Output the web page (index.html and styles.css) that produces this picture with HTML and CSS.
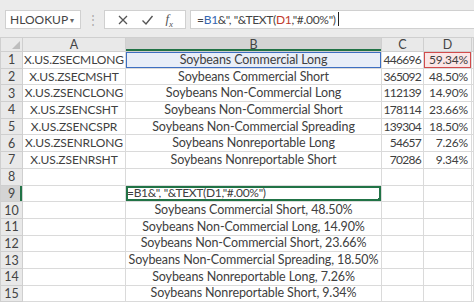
FILE: index.html
```html
<!DOCTYPE html>
<html lang="en">
<head>
    <meta charset="UTF-8">
    <title>Sheet</title>
    <link rel="stylesheet" href="styles.css">
</head>
<body>
    <div class="toolbar">
        <div class="namebox">
            <span>HLOOKUP</span>
            <span class="caret">&#9662;</span>
        </div>
        <div class="grip">&#8942;</div>
        <div class="fxbuttons">
            <svg width="12" height="12" viewBox="0 0 12 12"><path d="M2 2 L10 10 M10 2 L2 10" stroke="#555" stroke-width="1.3" fill="none"/></svg>
            <svg width="13" height="12" viewBox="0 0 13 12"><path d="M1.5 6.5 L5 10 L11.5 2" stroke="#555" stroke-width="1.4" fill="none"/></svg>
            <span class="fx">f<sub>x</sub></span>
        </div>
        <div class="formula">=<span class="ref-b">B1</span>&amp;", "&amp;TEXT(<span class="ref-d">D1</span>,"#.00%")<span class="cursor"></span></div>
    </div>

    <table class="sheet">
        <colgroup>
            <col class="c-hdr"><col class="c-a"><col class="c-b"><col class="c-c"><col class="c-d"><col>
        </colgroup>
        <tr class="head">
            <th class="corner"></th><th>A</th><th class="sel-col">B</th><th>C</th><th>D</th><th></th>
        </tr>
        <tr><th>1</th><td class="code">X.US.ZSECMLONG</td><td class="hl-blue">Soybeans Commercial Long</td><td class="num">446696</td><td class="hl-red pct">59.34%</td><td></td></tr>
        <tr><th>2</th><td class="code">X.US.ZSECMSHT</td><td>Soybeans Commercial Short</td><td class="num">365092</td><td class="pct">48.50%</td><td></td></tr>
        <tr><th>3</th><td class="code">X.US.ZSENCLONG</td><td>Soybeans Non-Commercial Long</td><td class="num">112139</td><td class="pct">14.90%</td><td></td></tr>
        <tr><th>4</th><td class="code">X.US.ZSENCSHT</td><td>Soybeans Non-Commercial Short</td><td class="num">178114</td><td class="pct">23.66%</td><td></td></tr>
        <tr><th>5</th><td class="code">X.US.ZSENCSPR</td><td>Soybeans Non-Commercial Spreading</td><td class="num">139304</td><td class="pct">18.50%</td><td></td></tr>
        <tr><th>6</th><td class="code">X.US.ZSENRLONG</td><td>Soybeans Nonreportable Long</td><td class="num">54657</td><td class="pct">7.26%</td><td></td></tr>
        <tr><th>7</th><td class="code">X.US.ZSENRSHT</td><td>Soybeans Nonreportable Short</td><td class="num">70286</td><td class="pct">9.34%</td><td></td></tr>
        <tr><th>8</th><td></td><td></td><td></td><td></td><td></td></tr>
        <tr><th class="sel-row">9</th><td></td><td class="active">=B1&amp;", "&amp;TEXT(D1,"#.00%")</td><td></td><td></td><td></td></tr>
        <tr><th>10</th><td></td><td>Soybeans Commercial Short, 48.50%</td><td></td><td></td><td></td></tr>
        <tr><th>11</th><td></td><td>Soybeans Non-Commercial Long, 14.90%</td><td></td><td></td><td></td></tr>
        <tr><th>12</th><td></td><td>Soybeans Non-Commercial Short, 23.66%</td><td></td><td></td><td></td></tr>
        <tr><th>13</th><td></td><td>Soybeans Non-Commercial Spreading, 18.50%</td><td></td><td></td><td></td></tr>
        <tr><th>14</th><td></td><td>Soybeans Nonreportable Long, 7.26%</td><td></td><td></td><td></td></tr>
        <tr><th>15</th><td></td><td>Soybeans Nonreportable Short, 9.34%</td><td></td><td></td><td></td></tr>
    </table>
</body>
</html>
```

FILE: styles.css
```css
* {
    margin: 0;
    padding: 0;
    box-sizing: border-box;
}

body {
    width: 474px;
    height: 304px;
    overflow: hidden;
    background-color: #ffffff;
    font-family: Lato, 'Open Sans', sans-serif;
    color: #404040;
}

.toolbar {
    height: 37px;
    background-color: #ebebeb;
    display: flex;
    align-items: center;
    padding: 2px 0 0 5px;
}

.namebox {
    width: 76px;
    height: 19px;
    background-color: #ffffff;
    border: 1px solid #d0d0d0;
    display: flex;
    align-items: center;
    justify-content: space-between;
    padding: 0 6px 0 4px;
    font-size: 12px;
    color: #444;
}

.caret {
    font-size: 8px;
    color: #666;
}

.grip {
    width: 23px;
    text-align: center;
    color: #aaa;
    font-size: 12px;
}

.fxbuttons {
    width: 82px;
    height: 19px;
    background-color: #ffffff;
    border: 1px solid #d0d0d0;
    display: flex;
    align-items: center;
    justify-content: space-around;
    padding: 0 6px;
}

.fx {
    font-family: 'Liberation Serif', serif;
    font-style: italic;
    font-size: 13px;
    color: #555;
}

.fx sub {
    font-size: 9px;
}

.formula {
    flex: 1;
    height: 19px;
    margin-left: 4px;
    background-color: #ffffff;
    border: 1px solid #d0d0d0;
    border-right: none;
    padding-left: 6px;
    font-size: 12px;
    letter-spacing: -0.3px;
    line-height: 17px;
    color: #444;
    white-space: nowrap;
}

.ref-b {
    color: #3465b0;
}

.ref-d {
    color: #c0392b;
}

.cursor {
    display: inline-block;
    width: 1px;
    height: 14px;
    background-color: #222;
    vertical-align: -2px;
    margin-left: 2px;
}

.sheet {
    border-collapse: collapse;
    table-layout: fixed;
    width: 474px;
    font-size: 12.5px;
}

.c-hdr { width: 22px; }
.c-a { width: 103px; }
.c-b { width: 256px; }
.c-c { width: 42px; }
.c-d { width: 48px; }

.sheet tr {
    height: 16.7px;
}

.sheet tr.head {
    height: 14px;
}

.sheet th {
    background-color: #e9e9e9;
    border: 1px solid #cfcfcf;
    font-weight: normal;
    color: #444;
    font-size: 12.5px;
    line-height: 13px;
}

.sheet tr.head th {
    text-align: center;
    line-height: 12px;
}

.sheet td {
    border: 1px solid #dadada;
    text-align: center;
    white-space: nowrap;
    overflow: hidden;
    line-height: 14px;
    letter-spacing: -0.1px;
    position: relative;
}

.sheet td.code {
    font-size: 12px;
}

.sheet td.num {
    text-align: right;
    padding-right: 2px;
    font-size: 12px;
    letter-spacing: -0.7px;
}

.sheet td.pct {
    text-align: right;
    padding-right: 3px;
    font-size: 12px;
    letter-spacing: -0.2px;
}

.corner {
    position: relative;
}

.corner::after {
    content: "";
    position: absolute;
    right: 2px;
    bottom: 2px;
    border-left: 8px solid transparent;
    border-bottom: 8px solid #bdbdbd;
}

.sel-col {
    background-color: #d4d4d4 !important;
    box-shadow: inset 0 -2px 0 #217346;
}

.sel-row {
    background-color: #d4d4d4 !important;
    box-shadow: inset -2px 0 0 #217346;
}

.hl-blue {
    background-color: #e8eef8;
    box-shadow: inset 0 0 0 1px #3d6fc2;
}

.hl-red {
    background-color: #fbe6e6;
    box-shadow: inset 0 0 0 1px #d14b4b;
}

.active {
    text-align: left !important;
    padding-left: 1px;
    font-size: 12px;
    letter-spacing: -0.3px !important;
    box-shadow: inset 0 0 0 2px #217346;
}

.active::after {
    content: "";
    position: absolute;
    right: -1px;
    bottom: -1px;
    width: 4px;
    height: 4px;
    background-color: #217346;
}
```
